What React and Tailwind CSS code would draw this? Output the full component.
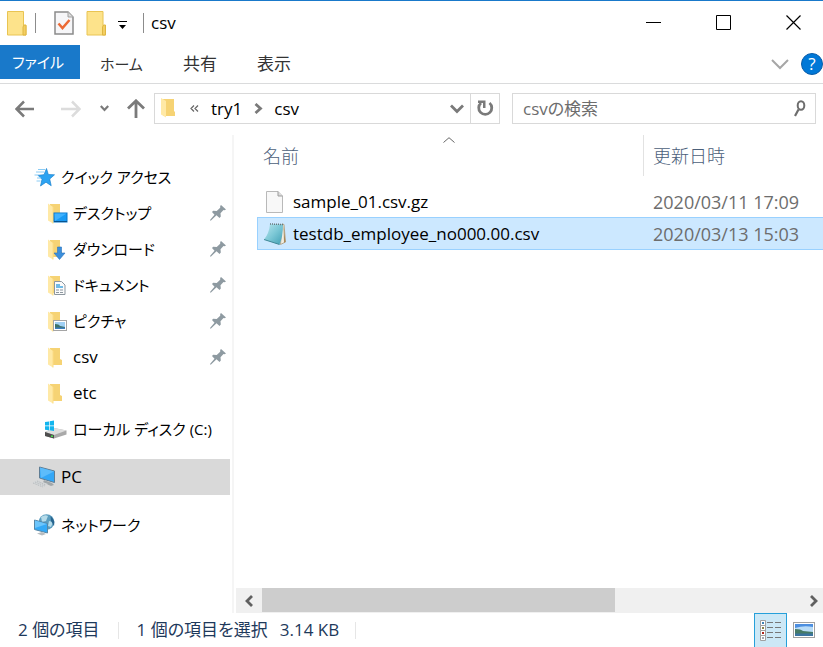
import React from 'react';

const Folder = ({ children }) => (
    <svg className="size-6 shrink-0" viewBox="0 0 24 24" aria-hidden="true">
        <path d="M6 3h10v11l2 1v5H6z" fill="#f6d374" />
        <path d="M4 2.500l5 3.500v16.500l-5-3z" fill="#ffe9a6" />
        <path d="M9 6v16.500" stroke="#fbdc86" strokeWidth="1" />
        {children}
    </svg>
);

const DesktopIcon = () => (
    <Folder>
        <rect x="10" y="12" width="13" height="9" fill="#1a9bf4" stroke="#0b76c8" />
        <path d="M10.500 12.500h12L11 20z" fill="#3fb2ff" />
        <path d="M10 20.500h13" stroke="#08548f" />
    </Folder>
);

const DownloadIcon = () => (
    <Folder>
        <path d="M13.500 10h4v6h3.500l-5.500 6.500-5.500-6.500h3.500z" fill="#3b8fdc" stroke="#2873bd" strokeWidth=".6" />
    </Folder>
);

const DocumentsIcon = () => (
    <Folder>
        <path d="M10.500 8.500h7l3.500 3.500v9.500H10.500z" fill="#fbfbfb" stroke="#8d979f" />
        <path d="M12 12h4M12 14h7" stroke="#41a5e0" strokeWidth="1.500" />
        <path d="M12 17h3M16 17h3M12 19.500h3M16 19.500h3" stroke="#8d979f" />
    </Folder>
);

const PicturesIcon = () => (
    <Folder>
        <rect x="9.500" y="11.500" width="13" height="10" fill="#fff" stroke="#a5a5a5" />
        <rect x="11" y="13" width="10" height="7" fill="#9fd0f5" />
        <path d="M11 15q4 0 5 2l5 1v2H11z" fill="#3e7268" />
        <path d="M11 18.500h10V20H11z" fill="#3b7fc0" />
    </Folder>
);

const DriveIcon = () => (
    <svg className="size-6 shrink-0" viewBox="0 0 24 24" aria-hidden="true">
        <path d="M1 15l9-4 12.500 2.500v4L10 21.500 1 19z" fill="#a9a9a9" />
        <path d="M1 15l9-4 12.500 2.500L10 18z" fill="#dedede" />
        <path d="M1 15l9 3v3.500L1 19z" fill="#4e4e4e" />
        <path d="M7 18.500h2V20H7z" fill="#47dd4b" />
        <path d="M1 5l4-.600V8.500H1zM5.700 4.300L10 3.600v4.900H5.700zM1 9.200h4v4L1 12.700zM5.700 9.200H10v4.700l-4.300-.600z" fill="#13b5ee" />
    </svg>
);

const StarIcon = () => (
    <svg className="size-6 shrink-0" viewBox="0 0 24 24" aria-hidden="true">
        <path d="M14.500 3.500l1.800 6 6.200.3-4.800 4.200 1.500 6.700-5.200-3.500L8.500 21l1.500-6.700L6 10.300l6-.6z" fill="#2ca3f2" stroke="#1b83cf" strokeWidth=".7" />
        <path d="M6 4.500h7M4 7h8M2.500 10h4M5 13h4M4.500 16h4" stroke="#8accf5" />
    </svg>
);

const PcIcon = () => (
    <svg className="size-6 shrink-0" viewBox="0 0 24 24" aria-hidden="true">
        <path d="M7.500 2l15 4v11.500l-15-4.500z" fill="#33a7f7" stroke="#5f7d94" />
        <path d="M8 2.500l14 4L9 13z" fill="#5dbcfb" />
        <path d="M12 15l8 3 2 2-3 1-8-3.500z" fill="#a1a7aa" />
        <path d="M0 18l5-3 11 4-5 3.500z" fill="#d5d8da" />
        <path d="M3 17l10 4M5 16l9 4M1 18l10 4" stroke="#a4a8aa" strokeWidth=".6" strokeDasharray="1.500 1" />
    </svg>
);

const NetworkIcon = () => (
    <svg className="size-6 shrink-0" viewBox="0 0 24 24" aria-hidden="true">
        <circle cx="14.500" cy="9" r="7.800" fill="#5b9dbf" />
        <path d="M9 4q4-3 7-1l-2 5-4 1zM17 8l4 1-2 5-3-1z" fill="#b5dbe9" />
        <path d="M18.500 3q5 4 3.500 10l-3-5z" fill="#28658f" />
        <path d="M2.500 7l13 3.500V20l-13-3.500z" fill="#34a9f6" stroke="#5787a6" />
        <path d="M3 7.500l12 3.500-12 4z" fill="#6cc5fb" />
        <path d="M5 20.500l5-1.500 4 2-4 1.500z" fill="#b6bcc0" />
    </svg>
);

const Pin = () => (
    <svg className="ml-auto size-4 shrink-0" viewBox="0 0 16 16" aria-hidden="true">
        <path d="M11 0l5 4.500-1.500.8-1-.2-3 3.200.3 3.200-1.300 1.500-3-2.700L1 15.500H0V15l4.500-5.300L2 7l1.200-1.200 3.500.1 3.500-3.200V1z" fill="#8e9aa1" />
    </svg>
);

const TitleFolder = ({ className }) => (
    <svg className={className} viewBox="0 0 20 25" aria-hidden="true">
        <path d="M.500.500h16v14h2.500v9.500H.500z" fill="#fde38b" stroke="#e9c452" />
        <path d="M16 24v-8l1-2h2v10z" fill="#f3ce62" stroke="#dfb640" />
    </svg>
);

const PictureThumb = () => (
    <svg width="22" height="17" viewBox="0 0 22 17" aria-hidden="true">
        <rect x=".5" y=".5" width="21" height="15" fill="#fff" stroke="#a0a0a0" />
        <rect x="2" y="2" width="18" height="12" fill="#b9dcf7" />
        <path d="M2 2h18v3q-9-2-18 1z" fill="#4d8fe0" />
        <path d="M2 7q6 0 8 2l10 1v2H2z" fill="#467a66" />
        <path d="M2 11.500h18V14H2z" fill="#3b74a0" />
    </svg>
);

const Sheet = () => (
    <svg className="size-6 shrink-0" viewBox="0 0 24 24" aria-hidden="true">
        <path d="M3.500 1.500H15l4.500 4.500v16.500h-16z" fill="#f8f8f8" stroke="#b9b9b9" />
        <path d="M15 1.500V6h4.500" fill="#dcdcdc" stroke="#9d9d9d" />
    </svg>
);

const Notepad = () => (
    <svg className="size-6 shrink-0" viewBox="0 0 24 24" aria-hidden="true">
        <defs>
            <linearGradient id="cover" x1="0" y1="0" x2="1" y2="1">
                <stop offset="0" stopColor="#b9e6ee" />
                <stop offset=".5" stopColor="#7cc8d6" />
                <stop offset="1" stopColor="#3f9fb4" />
            </linearGradient>
        </defs>
        <path d="M19 2l2 .5 1.500 17.500-5 2.500z" fill="#f2eee2" stroke="#b3a88f" />
        <path d="M20.500 3l2 17-1.500.7z" fill="#a8895a" />
        <path d="M7 2l13 .5q0 12-3.500 20L1 17.500Q6 12 7 2z" fill="url(#cover)" />
        <path d="M7 2l13 .5" stroke="#68777b" strokeWidth="1.500" strokeDasharray="1 1" />
        <path d="M1 17.500l15.500 5" stroke="#3e8797" />
    </svg>
);

const places = [
    { label: 'デスクトップ', Icon: DesktopIcon, pinned: true },
    { label: 'ダウンロード', Icon: DownloadIcon, pinned: true },
    { label: 'ドキュメント', Icon: DocumentsIcon, pinned: true },
    { label: 'ピクチャ', Icon: PicturesIcon, pinned: true },
    { label: 'csv', Icon: Folder, pinned: true, latin: true },
    { label: 'etc', Icon: Folder, latin: true },
    { label: 'ローカル ディスク (C:)', Icon: DriveIcon },
];

const files = [
    { name: 'sample_01.csv.gz', date: '2020/03/11 17:09', Icon: Sheet },
    { name: 'testdb_employee_no000.00.csv', date: '2020/03/13 15:03', Icon: Notepad, selected: true },
];

const TitleBar = () => (
    <header className="flex h-[45px] items-center border-t border-[#1979ca] pl-[7px] pr-[21px]">
        <TitleFolder className="h-[25px] w-5" />
        <span className="ml-2 h-5 w-px bg-[#8c8c8c]" />
        <button aria-label="プロパティ" className="ml-[18px]">
            <svg width="20" height="24" viewBox="0 0 20 24">
                <path d="M1 1h13l5 5v17H1z" fill="#f6f6f8" stroke="#8b8b8b" strokeWidth="1.500" />
                <path d="M14 1v5h5" fill="#ddd" stroke="#a0a0a0" />
                <path d="M4.500 12.500l4 4.500 7-8" fill="none" stroke="#ec6a35" strokeWidth="2.500" />
            </svg>
        </button>
        <button aria-label="新しいフォルダー" className="ml-3">
            <TitleFolder className="h-[25px] w-[21px]" />
        </button>
        <button aria-label="カスタマイズ" className="ml-[11px] mt-1">
            <svg width="9" height="8" viewBox="0 0 9 8">
                <path d="M0 0h9v1H0zM1 4h7L4.500 8z" fill="#000" />
            </svg>
        </button>
        <span className="ml-4 h-5 w-px bg-[#8c8c8c]" />
        <h1 className="ml-[7px] text-[17px]">csv</h1>
        <div className="ml-auto flex gap-[54px]">
            <button aria-label="最小化">
                <svg width="16" height="16" viewBox="0 0 16 16"><path d="M0 7.500h15" stroke="#000" /></svg>
            </button>
            <button aria-label="最大化">
                <svg width="16" height="16" viewBox="0 0 16 16"><path d="M.5.5h14v14H.5z" fill="none" stroke="#000" /></svg>
            </button>
            <button aria-label="閉じる">
                <svg width="16" height="16" viewBox="0 0 16 16"><path d="M.5.5l14 14M14.500.5l-14 14" stroke="#000" strokeWidth="1.200" /></svg>
            </button>
        </div>
    </header>
);

const Ribbon = () => (
    <nav className="flex h-[39px] items-start border-b border-[#dadbdc] text-[17px] text-[#333]">
        <button className="h-[34px] w-20 bg-[#1979ca] pr-1 text-[15px] text-white">ファイル</button>
        <div className="flex h-[38px] items-center gap-10 pl-5">
            <button className="text-[15px]">ホーム</button>
            <button>共有</button>
            <button>表示</button>
        </div>
        <div className="ml-auto flex h-[38px] items-center gap-3">
            <button aria-label="リボンの展開">
                <svg width="18" height="11" viewBox="0 0 18 11"><path d="M1 1l8 8 8-8" fill="none" stroke="#a6a6a6" strokeWidth="2" /></svg>
            </button>
            <button aria-label="ヘルプ" className="size-[22px] rounded-full border border-[#0a5ca8] bg-[#0078d7] text-[17px] leading-5 text-white">?</button>
        </div>
    </nav>
);

const AddressBar = () => (
    <div className="flex items-center pb-[11px] pl-[15px] pr-[7px] pt-[9px]">
        <div className="flex w-[139px] items-center">
            <button aria-label="戻る">
                <svg width="20" height="18" viewBox="0 0 20 18"><path d="M19 9H2M9 1.500L1.500 9 9 16.500" fill="none" stroke="#7a7a7a" strokeWidth="2.500" /></svg>
            </button>
            <button aria-label="進む" className="ml-[26px]" disabled>
                <svg width="20" height="18" viewBox="0 0 20 18"><path d="M0 9h18M11 1.500L18.500 9 11 16.500" fill="none" stroke="#dcdcdc" strokeWidth="2.500" /></svg>
            </button>
            <button aria-label="最近表示した場所" className="ml-[19px]">
                <svg width="9" height="7" viewBox="0 0 9 7"><path d="M.8 1l3.700 4 3.700-4" fill="none" stroke="#7a7a7a" strokeWidth="2.200" /></svg>
            </button>
            <button aria-label="上へ" className="ml-[18px]">
                <svg width="18" height="20" viewBox="0 0 18 20"><path d="M9 19V2M1 9.500L9 1.800l8 7.700" fill="none" stroke="#7a7a7a" strokeWidth="2.800" /></svg>
            </button>
        </div>
        <div className="flex h-[31px] flex-1 items-center border border-[#d9d9d9] text-[17px]">
            <svg className="ml-[2px] size-6" viewBox="0 0 24 24" aria-hidden="true">
                <path d="M6 2h11v12l1 1v4H6z" fill="#f6d374" />
                <path d="M4 1l5 3v16.500l-5-3z" fill="#ffe9a6" />
            </svg>
            <button aria-label="上位フォルダー" className="ml-[9px]">
                <svg width="9" height="7" viewBox="0 0 9 7"><path d="M4 .5l-3 3 3 3M8 .5l-3 3 3 3" fill="none" stroke="#666" strokeWidth="1.200" /></svg>
            </button>
            <button className="ml-3">try1</button>
            <svg className="ml-3" width="9" height="11" viewBox="0 0 9 11" aria-hidden="true"><path d="M1.500 1l5 4.500-5 4.500" fill="none" stroke="#7a7a7a" strokeWidth="2.800" /></svg>
            <button className="ml-[11px]">csv</button>
            <button aria-label="以前の場所" className="ml-auto mr-[6px]">
                <svg width="14" height="10" viewBox="0 0 14 10"><path d="M1 1.500l6 6 6-6" fill="none" stroke="#7a7a7a" strokeWidth="2.800" /></svg>
            </button>
            <button aria-label="最新の情報に更新" className="flex h-full w-[29px] items-center justify-center border-l border-[#d9d9d9]">
                <svg width="17" height="17" viewBox="0 0 17 17">
                    <path d="M12.500 3a6.500 6.500 0 1 1-8.500 0" fill="none" stroke="#7a7a7a" strokeWidth="2.800" />
                    <path d="M1 .5h7.500V8H6V3H1z" fill="#7a7a7a" />
                </svg>
            </button>
        </div>
        <label className="ml-3 flex h-[31px] w-[304px] items-center border border-[#d9d9d9] pl-[10px] pr-[9px]">
            <input type="search" aria-label="検索" placeholder="csvの検索" className="min-w-0 flex-1 text-[17px] outline-none placeholder:text-[#6d6d6d]" />
            <svg width="12" height="17" viewBox="0 0 12 17" aria-hidden="true">
                <ellipse cx="7" cy="5.500" rx="3.300" ry="4.300" fill="none" stroke="#6d6d6d" strokeWidth="2" />
                <path d="M4.500 9.500L1 16" stroke="#6d6d6d" strokeWidth="2.200" />
            </svg>
        </label>
    </div>
);

const Sidebar = () => (
    <aside className="w-[234px] shrink-0 border-r-2 border-[#f5f5f5] pr-[2px] pt-6 text-[15px]">
        <button className="flex h-9 w-full items-center gap-[5px] pl-8">
            <StarIcon />
            クイック アクセス
        </button>
        <ul>
            {places.map(({ label, Icon, pinned, latin }) => (
                <li key={label} className={latin ? 'text-[17px]' : ''}>
                    <button className="flex h-9 w-full items-center gap-[5px] whitespace-nowrap pl-11 pr-1">
                        <Icon />
                        {label}
                        {pinned && <Pin />}
                    </button>
                </li>
            ))}
        </ul>
        <button className="mt-3 flex h-9 w-full items-center gap-[5px] bg-[#d9d9d9] pl-8 text-[17px]">
            <PcIcon />
            PC
        </button>
        <button className="mt-3 flex h-9 w-full items-center gap-[5px] pl-8">
            <NetworkIcon />
            ネットワーク
        </button>
    </aside>
);

const FileList = () => (
    <main className="flex min-w-0 flex-1 flex-col pl-[2px]">
        <div className="flex-1 pl-[21px]">
            <table className="w-full table-fixed border-separate border-spacing-0 text-left text-[17px]">
                <thead className="text-lg text-[#4c607a]">
                    <tr>
                        <th className="relative h-[51px] w-[386px] p-0 align-top font-light">
                            <svg className="absolute left-[186px] top-[2px]" width="12" height="6" viewBox="0 0 12 6" aria-hidden="true"><path d="M.5 5.500L6 .7l5.500 4.800" fill="none" stroke="#666" /></svg>
                            <div className="flex h-[41px] items-center pl-[6px]">名前</div>
                        </th>
                        <th className="h-[51px] p-0 align-top font-light">
                            <div className="flex h-[41px] items-center border-l border-[#e2e2e2] pl-[9px]">更新日時</div>
                        </th>
                    </tr>
                </thead>
                <tbody>
                    {files.map(({ name, date, Icon, selected }) => (
                        <tr key={name} className={selected ? 'bg-[#cce8ff]' : ''}>
                            <td className={selected ? 'h-[33px] border-y border-l border-[#99d1ff] p-0' : 'h-[31px] border-l border-transparent p-0'}>
                                <div className="flex items-center gap-[6px] pl-[5px]">
                                    <Icon />
                                    {name}
                                </div>
                            </td>
                            <td className={selected ? 'h-[33px] border-y border-[#99d1ff] p-0 pl-[10px] text-lg text-[#6d6d6d]' : 'h-[31px] p-0 pl-[10px] text-lg text-[#6d6d6d]'}>{date}</td>
                        </tr>
                    ))}
                </tbody>
            </table>
        </div>
        <div className="flex h-[25px] bg-[#f0f0f0]">
            <button aria-label="左へスクロール" className="flex w-[26px] items-center justify-center">
                <svg width="10" height="12" viewBox="0 0 10 12"><path d="M8 1L3 6l5 5" fill="none" stroke="#606060" strokeWidth="2.800" /></svg>
            </button>
            <div className="flex-1">
                <div className="h-6 w-[65%] bg-[#cdcdcd]" />
            </div>
            <button aria-label="右へスクロール" className="flex w-[18px] items-center justify-center">
                <svg width="10" height="12" viewBox="0 0 10 12"><path d="M2 1l5 5-5 5" fill="none" stroke="#606060" strokeWidth="2.800" /></svg>
            </button>
        </div>
    </main>
);

const StatusBar = () => (
    <footer className="flex h-[34px] items-center pl-[18px] text-[17px] text-[#1e395b]">
        <span>2 個の項目</span>
        <span className="ml-[18px] h-[17px] w-px bg-[#e6e6e6]" />
        <span className="ml-[18px]">1 個の項目を選択</span>
        <span className="ml-3">3.14 KB</span>
        <span className="ml-4 h-[17px] w-px bg-[#e6e6e6]" />
        <div className="ml-auto flex h-full items-center gap-[6px] pr-2">
            <button aria-label="詳細表示" className="flex h-full w-[33px] items-center justify-center border border-b-0 border-[#26a0da] bg-[#cce8f6]">
                <svg width="22" height="22" viewBox="0 0 22 22">
                    <g fill="#fff" stroke="#a0a0a0">
                        <path d="M.5.5h5v5h-5zM.5 5.500h5v5h-5zM.5 10.500h5v5h-5zM.5 15.500h5v5h-5z" />
                    </g>
                    <path d="M2 2h2v2H2z" fill="#3d82b5" />
                    <path d="M2 7h2v2H2z" fill="#8a8447" />
                    <path d="M2 12h2v2H2z" fill="#b02318" />
                    <path d="M2 17h2v2H2z" fill="#9fa8b2" />
                    <path d="M7 2.500h6M15 2.500h6M7 7.500h6M15 7.500h6M7 12.500h6M15 12.500h6M7 17.500h6M15 17.500h6" stroke="#777" />
                </svg>
            </button>
            <button aria-label="縮小表示">
                <PictureThumb />
            </button>
        </div>
    </footer>
);

const App = () => {
    return (
        <div className="flex min-h-screen flex-col bg-white font-['Open_Sans','Noto_Sans_CJK_JP',sans-serif] text-black [font-feature-settings:'palt']">
            <TitleBar />
            <Ribbon />
            <AddressBar />
            <div className="flex flex-1">
                <Sidebar />
                <FileList />
            </div>
            <StatusBar />
        </div>
    );
};

export default App;
